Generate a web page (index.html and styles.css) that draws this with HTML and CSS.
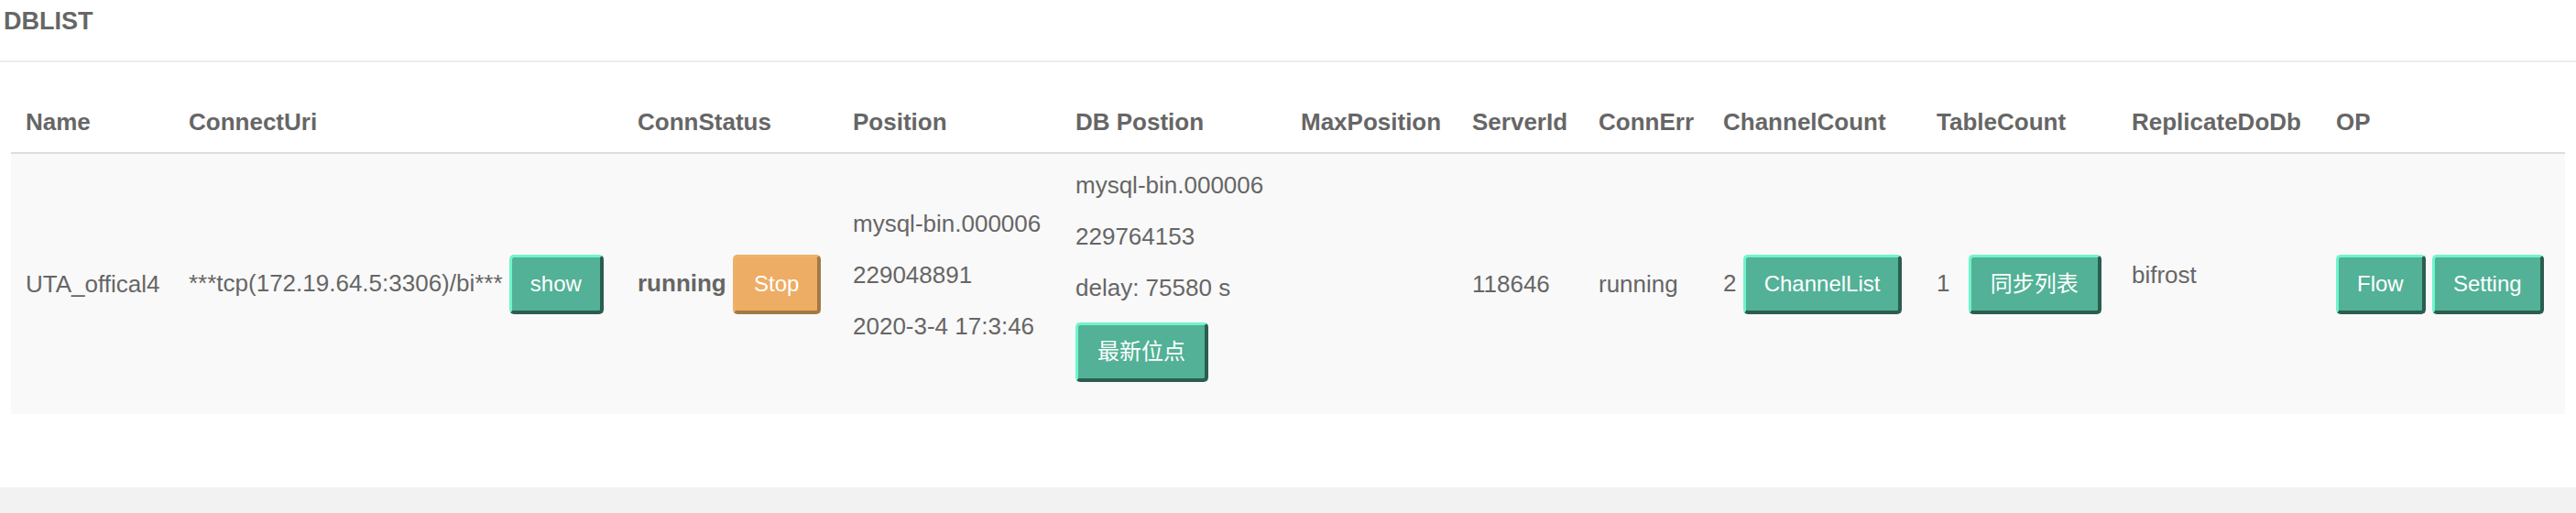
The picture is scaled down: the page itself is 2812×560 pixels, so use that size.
FILE: index.html
```html
<!DOCTYPE html>
<html lang="zh">
<head>
<meta charset="utf-8">
<title>DBLIST</title>
<link rel="stylesheet" href="styles.css">
</head>
<body>
<div class="page">
  <div class="panel-head">
    <h2 class="title">DBLIST</h2>
  </div>
  <div class="panel-body">
    <table class="dblist">
      <colgroup>
        <col class="c-name">
        <col class="c-uri">
        <col class="c-status">
        <col class="c-pos">
        <col class="c-dbpos">
        <col class="c-max">
        <col class="c-server">
        <col class="c-err">
        <col class="c-channel">
        <col class="c-table">
        <col class="c-rep">
        <col class="c-op">
      </colgroup>
      <thead>
        <tr>
          <th>Name</th>
          <th>ConnectUri</th>
          <th>ConnStatus</th>
          <th>Position</th>
          <th>DB Postion</th>
          <th>MaxPosition</th>
          <th>ServerId</th>
          <th>ConnErr</th>
          <th>ChannelCount</th>
          <th>TableCount</th>
          <th>ReplicateDoDb</th>
          <th>OP</th>
        </tr>
      </thead>
      <tbody>
        <tr>
          <td>UTA_offical4</td>
          <td>***tcp(172.19.64.5:3306)/bi*** <button class="btn">show</button></td>
          <td><strong class="status">running</strong> <button class="btn btn-warn">Stop</button></td>
          <td>
            <p class="line">mysql-bin.000006</p>
            <p class="line">229048891</p>
            <p class="line">2020-3-4 17:3:46</p>
          </td>
          <td>
            <p class="line">mysql-bin.000006</p>
            <p class="line">229764153</p>
            <p class="line">delay: 75580 s</p>
            <p class="line line-btn"><button class="btn btn-cjk">最新位点</button></p>
          </td>
          <td></td>
          <td>118646</td>
          <td>running</td>
          <td>2 <button class="btn">ChannelList</button></td>
          <td>1 <button class="btn btn-cjk btn-gap">同步列表</button></td>
          <td><p class="line">bifrost</p></td>
          <td><button class="btn">Flow</button> <button class="btn">Setting</button></td>
        </tr>
      </tbody>
    </table>
  </div>
  <div class="footer-band"></div>
</div>
</body>
</html>
```

FILE: styles.css
```css
html, body {
  margin: 0;
  padding: 0;
  background: #ffffff;
}

body {
  font-family: "Liberation Sans", "Noto Sans CJK SC", sans-serif;
  color: #666666;
  font-size: 26px;
  overflow: hidden;
}

.page {
  width: 2812px;
  height: 560px;
  overflow: hidden;
}

.panel-head {
  height: 66px;
  border-bottom: 2px solid #ececec;
  box-sizing: content-box;
}

.title {
  margin: 0;
  padding: 3px 0 0 4px;
  font-size: 27px;
  line-height: 40px;
  font-weight: bold;
  color: #666666;
}

.panel-body {
  padding: 29px 12px 80px 12px;
}

.dblist {
  width: 2788px;
  border-collapse: collapse;
  table-layout: fixed;
}

.c-name { width: 178px; }
.c-uri { width: 490px; }
.c-status { width: 235px; }
.c-pos { width: 243px; }
.c-dbpos { width: 246px; }
.c-max { width: 187px; }
.c-server { width: 138px; }
.c-err { width: 136px; }
.c-channel { width: 233px; }
.c-table { width: 213px; }
.c-rep { width: 223px; }
.c-op { width: 266px; }

.dblist th {
  text-align: left;
  font-weight: bold;
  font-size: 26px;
  line-height: 37px;
  padding: 18px 16px 14px 16px;
  border-bottom: 2px solid #dddddd;
  white-space: nowrap;
  color: #666666;
}

.dblist tbody tr {
  background: #f9f9f9;
}

.dblist td {
  padding: 16px;
  vertical-align: middle;
  line-height: 36px;
  white-space: nowrap;
}

.line {
  margin: 0 0 20px 0;
  line-height: 36px;
}

.line-btn {
  margin-bottom: 19px;
}

.line-btn .btn {
  vertical-align: top;
}

.status {
  font-weight: bold;
}

.btn {
  display: inline-block;
  font-family: "Liberation Sans", "Noto Sans CJK SC", sans-serif;
  font-size: 24px;
  line-height: 34px;
  padding: 12px 20px;
  margin: 0;
  color: #ffffff;
  background: #52b196;
  border-style: solid;
  border-width: 3px 4px 4px 3px;
  border-color: #6ff5cb #2b5e4f #2b5e4f #6ff5cb;
  border-radius: 5px;
  cursor: pointer;
}

.btn-cjk {
  padding-left: 21px;
  padding-right: 21px;
}

.btn-gap {
  margin-left: 13px;
}

.btn-warn {
  background: #edad65;
  border-color: #efb068 #a47945 #a47945 #efb068;
}

.footer-band {
  height: 28px;
  background: #f2f2f2;
}
```
